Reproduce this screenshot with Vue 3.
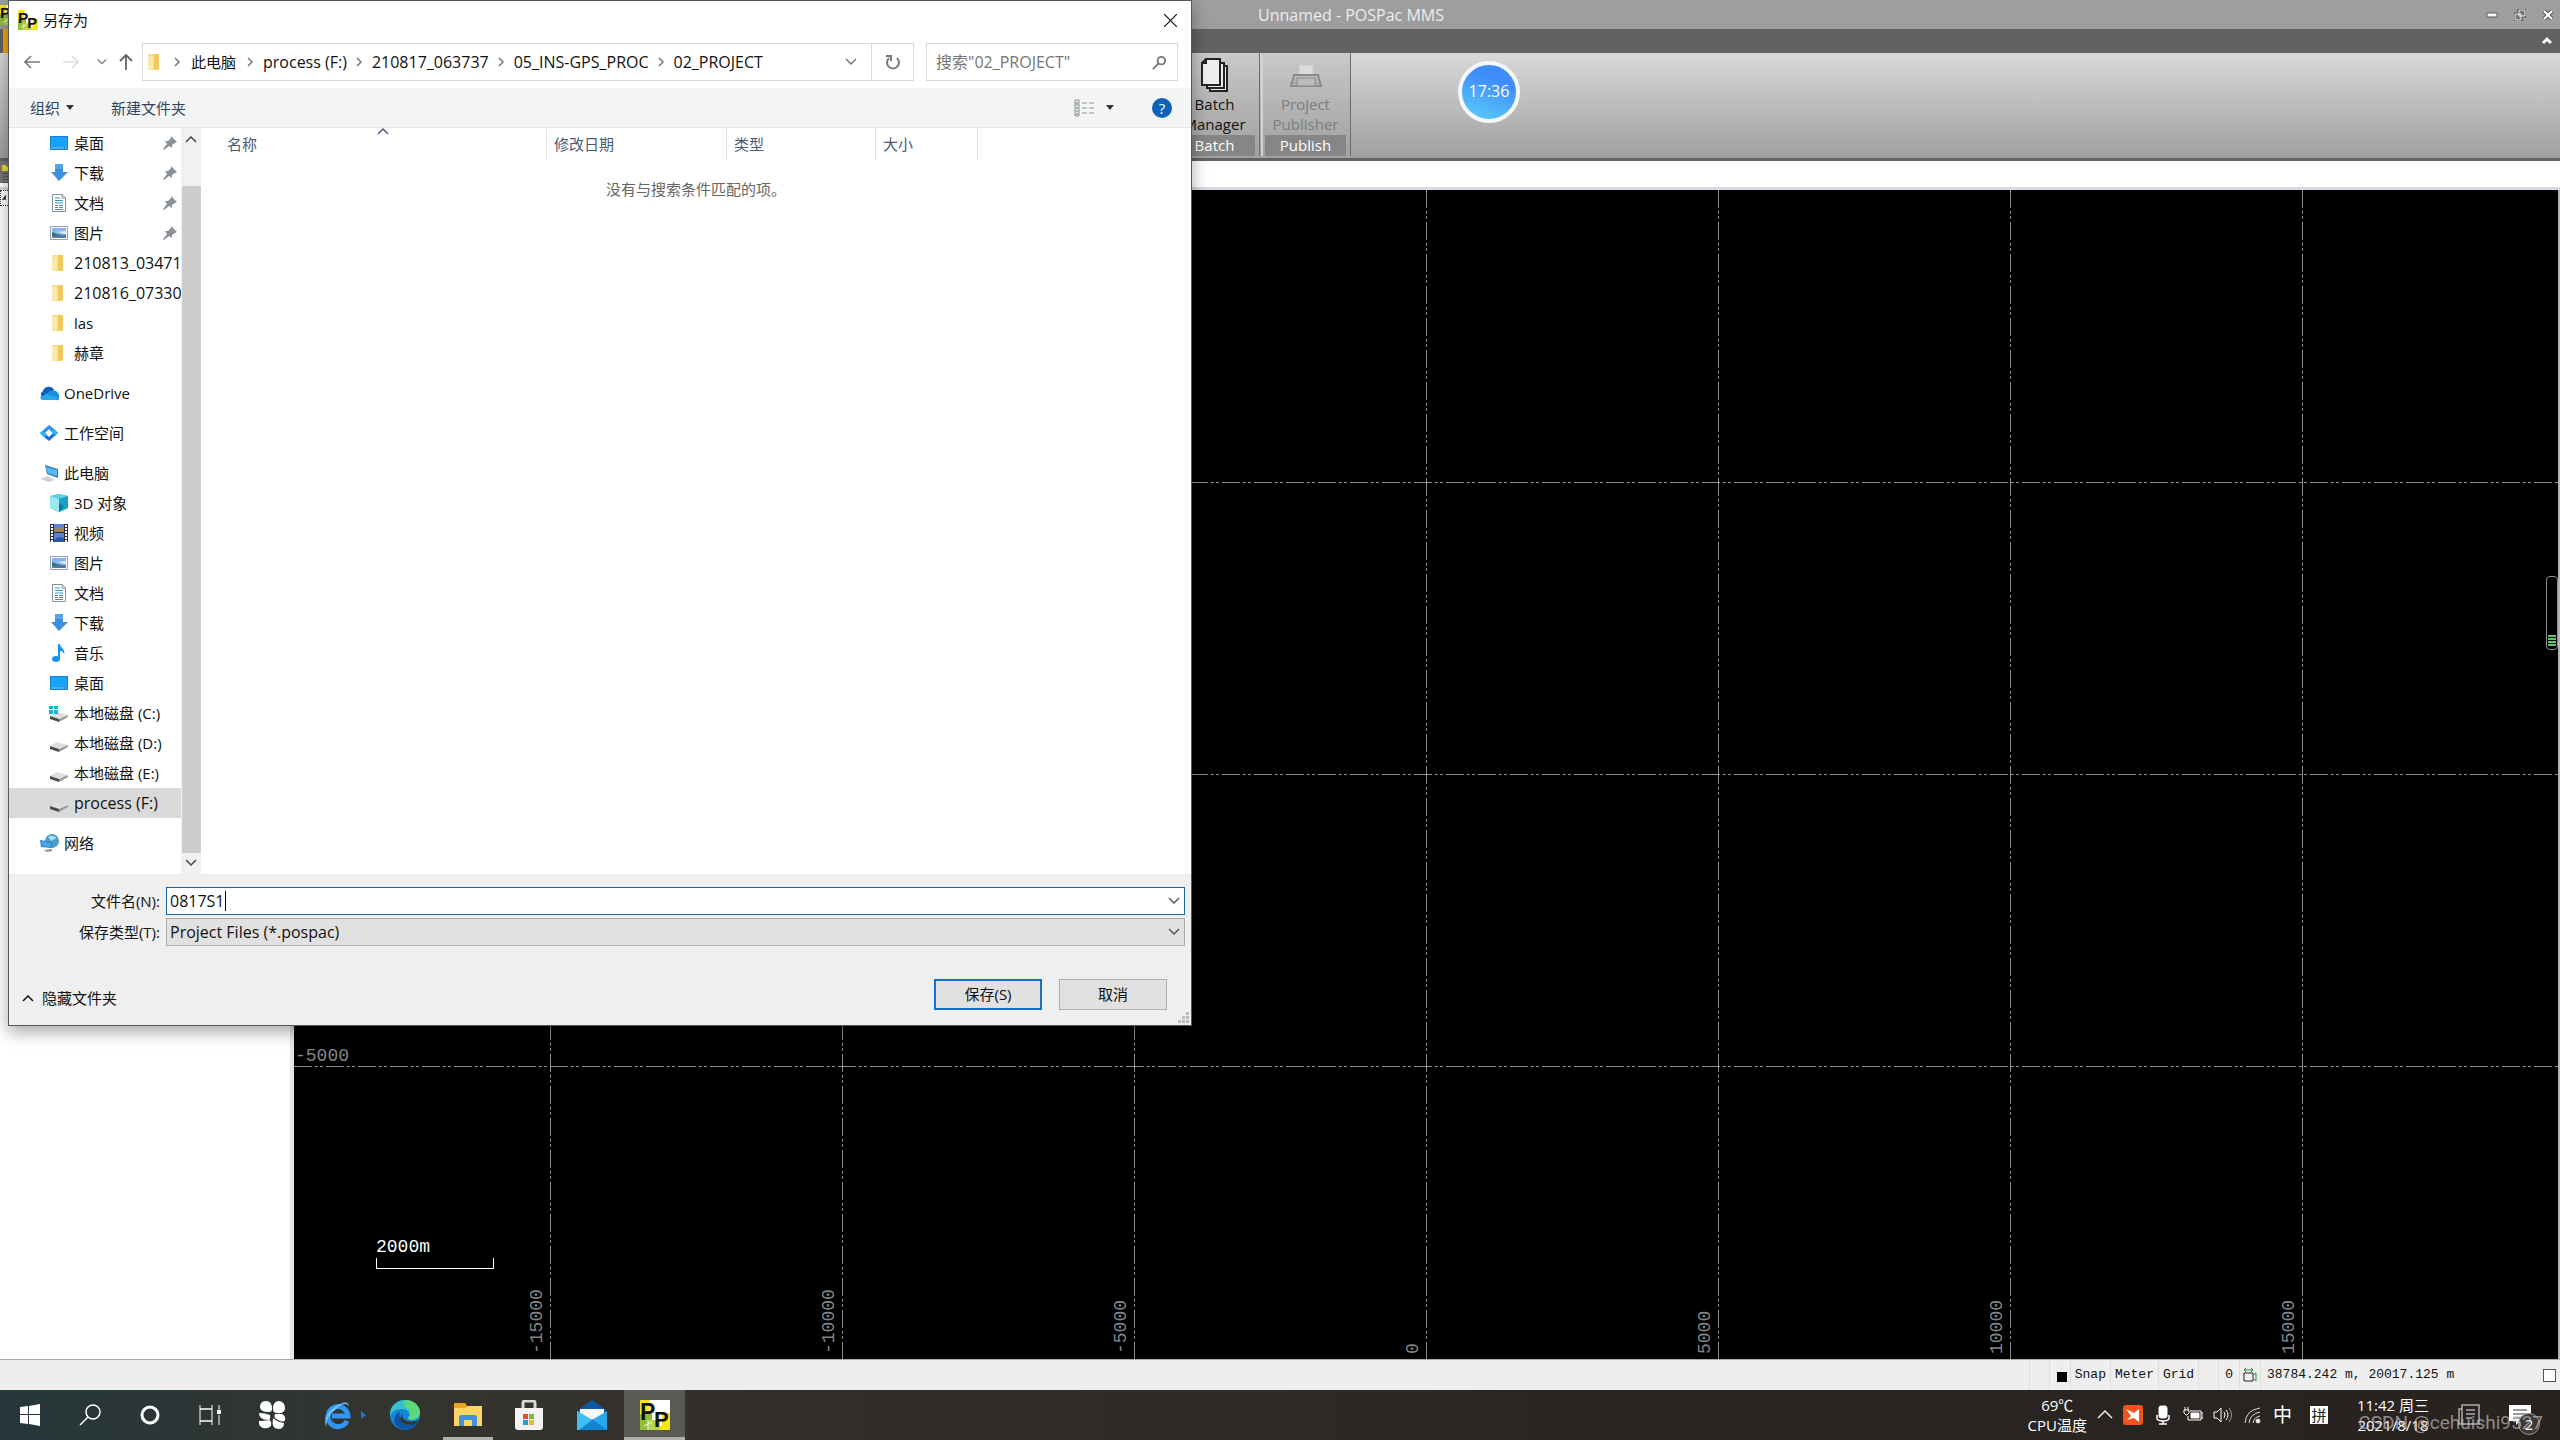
<script setup>
import { ref } from "vue";

const fileName = ref("0817S1");
const fileType = ref("pospac");
const search = ref("");
const selected = ref("process (F:)");

const crumbs = [
  { text: "此电脑", cjk: true },
  { text: "process (F:)" },
  { text: "210817_063737" },
  { text: "05_INS-GPS_PROC" },
  { text: "02_PROJECT" },
];

const groups = [
  [
    { icon: "desktop", text: "桌面", pin: true },
    { icon: "download", text: "下载", pin: true },
    { icon: "doc", text: "文档", pin: true },
    { icon: "picture", text: "图片", pin: true },
    { icon: "folder", text: "210813_034710", latin: true },
    { icon: "folder", text: "210816_073305", latin: true },
    { icon: "folder", text: "las" },
    { icon: "folder", text: "赫章" },
  ],
  [{ icon: "onedrive", text: "OneDrive", top: true }],
  [{ icon: "workspace", text: "工作空间", top: true }],
  [
    { icon: "pc", text: "此电脑", top: true },
    { icon: "cube", text: "3D 对象" },
    { icon: "video", text: "视频" },
    { icon: "picture", text: "图片" },
    { icon: "doc", text: "文档" },
    { icon: "download", text: "下载" },
    { icon: "music", text: "音乐" },
    { icon: "desktop", text: "桌面" },
    { icon: "sysdrive", text: "本地磁盘 (C:)" },
    { icon: "drive", text: "本地磁盘 (D:)" },
    { icon: "drive", text: "本地磁盘 (E:)" },
    { icon: "drive", text: "process (F:)", latin: true },
  ],
  [{ icon: "network", text: "网络", top: true }],
];

// grid lines in plot pixels
const meridians = [
  { x: 256, label: "-15000" },
  { x: 548, label: "-10000" },
  { x: 840, label: "-5000" },
  { x: 1132, label: "0" },
  { x: 1424, label: "5000" },
  { x: 1716, label: "10000" },
  { x: 2008, label: "15000" },
];
const parallels = [292, 584, 876];

const apps = [
  { icon: "start", name: "start" },
  { icon: "find", name: "search" },
  { icon: "cortana", name: "cortana" },
  { icon: "taskview", name: "task view" },
  { icon: "knot", name: "knot" },
  { icon: "ie", name: "browser", wide: true },
  { icon: "edge", name: "edge" },
  { icon: "explorer", name: "explorer", running: true },
  { icon: "store", name: "store" },
  { icon: "mail", name: "mail" },
  { icon: "pp", name: "POSPac", active: true },
];
</script>

<template>
  <div class="screen">
    <!-- shared icons -->
    <svg class="defs" aria-hidden="true">
      <symbol id="pp" viewBox="0 0 30 30">
        <path d="M0 0H30V30H0Z" fill="#fff" />
        <path d="M0 0H10L8 16H0ZM22 13H30V30H16L22 25Z" fill="#f5e614" />
        <path d="M0 14H12V30H0Z" fill="#8fbf35" />
        <path d="M9 20H20V30H9Z" fill="#b7d34a" />
        <path d="M8 20V30M4 26L12 22" stroke="#fff" fill="none" />
        <text x="0" y="20" font-size="23" font-weight="700" font-family="Liberation Sans" fill="#111">P</text>
        <text x="14" y="27" font-size="22" font-weight="700" font-family="Liberation Sans" fill="#111">P</text>
      </symbol>
      <symbol id="folder" viewBox="0 0 20 20">
        <path d="M3 2H14V18H3Z" fill="#f6dc8c" />
        <path d="M9 2H14V17L9 18Z" fill="#efc95c" />
        <path d="M3 3L8 5V19L3 17Z" fill="#fae9ae" />
      </symbol>
      <symbol id="desktop" viewBox="0 0 20 20">
        <path d="M1 3H19V17H1Z" fill="#1583d2" />
        <path d="M2 4H18V14H2Z" fill="#17a2fb" />
        <path d="M2 15H15M16 15H18" stroke="#8ed0fb" />
      </symbol>
      <symbol id="download" viewBox="0 0 20 20">
        <path d="M6 1H14V9H19L10 18L2 9H6Z" fill="#3b91dc" />
        <path d="M6 1H14V6H6Z" fill="#55a4e4" />
      </symbol>
      <symbol id="doc" viewBox="0 0 20 20">
        <path d="M3.500 1.500H13L16.500 5V18.500H3.500Z" fill="#fff" stroke="#82929c" />
        <path d="M13 1V5H17" fill="none" stroke="#82929c" />
        <path d="M6 5H11M6 7.500H14M6 10H14" stroke="#2c9bc7" />
        <path d="M6 12.500H9M6 14.500H9M10 12.500H14M6 16.500H14M10 14.500H14" stroke="#5c7f9b" />
      </symbol>
      <symbol id="picture" viewBox="0 0 20 20">
        <path d="M1.500 3.500H18.500V16.500H1.500Z" fill="#fff" stroke="#93a0b1" />
        <path d="M3 5H17V15H3Z" fill="#86b6ec" />
        <path d="M8 9L17 8V11Z" fill="#e2f1ff" />
        <path d="M3 9L8 11L17 13V15H3Z" fill="#3d6f75" />
        <path d="M3 13L17 12V15H3Z" fill="#4a7ea6" />
      </symbol>
      <symbol id="video" viewBox="0 0 20 20">
        <path d="M1 1H19V19H1Z" fill="#2b2c34" />
        <path d="M5 1H15V9H5ZM5 10H15V19H5Z" fill="#5c83d8" />
        <path d="M5 7L9 4L12 6L15 4V9H5Z" fill="#a38448" />
        <path d="M5 17L9 14L15 15V19H5Z" fill="#3157a5" />
        <path d="M3 2V19M17 2V19" stroke="#fff" stroke-width="2" stroke-dasharray="2 1" />
      </symbol>
      <symbol id="cube" viewBox="0 0 20 20">
        <path d="M10 1L19 3V15L10 19L1 15V3Z" fill="#2fc3d8" />
        <path d="M1 3L10 6V19L1 15Z" fill="#9de8ee" />
        <path d="M10 1L19 3L10 6L1 3Z" fill="#5dd3e0" />
        <path d="M10 6L19 3V15L10 19Z" fill="#17a3c6" />
        <path d="M10 10L15 13L10 19Z" fill="#0e7f9f" />
      </symbol>
      <symbol id="music" viewBox="0 0 20 20">
        <ellipse cx="7" cy="16" rx="4" ry="3" fill="#1593ef" />
        <path d="M9 1H11C11 5 17 6 15 12C15 9 13 8 11 8V16H9Z" fill="#1593ef" />
      </symbol>
      <symbol id="drive" viewBox="0 0 20 20">
        <path d="M1 13L8 9L19 12L10 16Z" fill="#dedede" />
        <path d="M1 13L10 16V19L1 16Z" fill="#4b4b4b" />
        <path d="M10 16L19 12V14L10 19Z" fill="#9b9b9b" />
      </symbol>
      <symbol id="sysdrive" viewBox="0 0 20 20">
        <use href="#drive" />
        <path d="M0 3H4V6H0ZM5 3H9V6H5ZM0 7H4V11H0ZM5 7H9V11H5Z" fill="#1fb2d6" />
      </symbol>
      <symbol id="onedrive" viewBox="0 0 20 20">
        <path d="M4 15A4 4 0 0 1 4 8A6 6 0 0 1 15 7L10 13Z" fill="#0b62bd" />
        <path d="M2 15L11 8C14 6 19 8 20 12A3 3 0 0 1 17 17H5Q2 17 2 15Z" fill="#1b8fe0" />
        <path d="M1 14L8 11L19 15Q18 17 16 17H5Q2 17 1 14Z" fill="#29a9ea" />
      </symbol>
      <symbol id="workspace" viewBox="0 0 20 20">
        <path d="M1 10L10 2L15 6L13 9L10 6L6 10L8 12L5 14Z" fill="#2d8bf5" />
        <path d="M19 10L10 18L5 14L8 12L10 14L14 10L12 8L15 6Z" fill="#1a6fe8" />
        <path d="M1 10L5 8L8 12L5 14ZM19 10L15 12L12 8L15 6Z" fill="#28b7f5" />
      </symbol>
      <symbol id="pc" viewBox="0 0 20 20">
        <path d="M6 2L19 6V15L8 11Z" fill="#2e7fbf" />
        <path d="M7 4L18 7V13L9 10Z" fill="#58b8f2" />
        <path d="M1 16L9 13L16 17L10 19Z" fill="#cfd4d8" />
      </symbol>
      <symbol id="network" viewBox="0 0 20 20">
        <circle cx="13" cy="8" r="7" fill="#4a9ec6" />
        <path d="M9 4Q13 1 18 5L12 8Z" fill="#a7dcee" />
        <path d="M1 7L13 9V15L2 14Z" fill="#2b7fc3" />
        <path d="M2 8L12 10V14L3 13Z" fill="#45a9ea" />
        <path d="M5 17L13 16V18L8 19Z" fill="#87949c" />
      </symbol>
      <symbol id="pin" viewBox="0 0 14 14">
        <path d="M8 0L14 6L12 7L9 9L9 12L6 10L1 14L0 13L4 8L2 5L5 5L8 2Z" fill="#8b9198" />
      </symbol>
      <symbol id="down" viewBox="0 0 12 12">
        <path d="M1 3L6 8L11 3" fill="none" stroke="currentColor" stroke-width="1.500" />
      </symbol>
      <symbol id="up" viewBox="0 0 12 12">
        <path d="M1 9L6 4L11 9" fill="none" stroke="currentColor" stroke-width="1.500" />
      </symbol>

      <symbol id="start" viewBox="0 0 30 30">
        <path d="M5 7L13 6V14H5ZM14 6L25 4V14H14ZM5 15H13V24L5 23ZM14 15H25V26L14 24Z" fill="#fff" />
      </symbol>
      <symbol id="find" viewBox="0 0 30 30">
        <circle cx="18" cy="12" r="7" fill="none" stroke="#fff" stroke-width="1.500" />
        <path d="M13 17L5 25" stroke="#fff" stroke-width="1.500" />
      </symbol>
      <symbol id="cortana" viewBox="0 0 30 30">
        <circle cx="15" cy="15" r="8" fill="none" stroke="#fff" stroke-width="3" />
      </symbol>
      <symbol id="taskview" viewBox="0 0 30 30">
        <path d="M5 5V9H17V5M5 25V21H17V25M5 9H17V21H5ZM24 5V10M24 15V25" fill="none" stroke="#fff" />
        <path d="M22 10H26V14H22Z" fill="#fff" />
      </symbol>
      <symbol id="knot" viewBox="0 0 30 30">
        <g fill="#fff">
          <path d="M9 1Q15 1 15 9Q15 12 12 12Q3 12 3 7Q3 1 9 1Z" />
          <path d="M22 1Q28 2 28 8Q28 14 20 13Q16 13 16 9Q16 1 22 1Z" />
          <path d="M2 13Q8 13 13 15Q14 20 11 20Q2 20 2 13Z" />
          <path d="M18 14H25Q29 16 28 20Q27 23 21 20Q16 18 18 14Z" />
          <path d="M2 21Q8 21 13 20Q15 23 14 26Q11 29 6 28Q1 26 2 21Z" />
          <path d="M16 18Q20 22 27 23Q27 29 21 29Q14 29 16 18Z" />
        </g>
      </symbol>
      <symbol id="ie" viewBox="0 0 30 30">
        <path d="M24 21A10 10 0 1 1 25 16H9" fill="none" stroke="#3096f5" stroke-width="5" />
        <path d="M3 27Q-1 15 13 6Q25 -1 26 6Q22 1 13 9Q3 17 3 27" fill="#6bc3fc" />
      </symbol>
      <symbol id="edge" viewBox="0 0 30 30">
        <circle cx="15" cy="15" r="15" fill="#1684d8" />
        <path d="M0 13C2 -4 28 -4 30 12C30 21 19 22 18 18C22 14 17 8 11 9C6 9 2 12 0 16Z" fill="#35c1d1" />
        <path d="M15 0C25 0 30 7 30 12C30 20 20 21 18 18C22 14 20 8 14 7Z" fill="#5bd87b" />
        <path d="M10 12C8 18 12 25 20 25Q24 25 28 22C24 31 10 32 5 24C3 18 6 13 10 12Z" fill="#0c55a4" />
        <path d="M13 12C10 19 17 24 29 20L28 22C22 27 12 25 10 19Z" fill="#343633" />
      </symbol>
      <symbol id="explorer" viewBox="0 0 30 30">
        <path d="M1 3H12L14 6H29V26H1Z" fill="#e8a51f" />
        <path d="M1 8H12L15 6H29V26H1Z" fill="#fbd566" />
        <path d="M6 26V18Q6 15 9 15H21Q24 15 24 18V26H19V20H11V26Z" fill="#3f91dc" />
      </symbol>
      <symbol id="store" viewBox="0 0 30 30">
        <path d="M9 9V3Q9 1 11 1H19Q21 1 21 3V9" fill="none" stroke="#d8d8d8" stroke-width="3" />
        <path d="M1 8H29V27Q29 30 26 30H4Q1 30 1 27Z" fill="#f3f3f3" />
        <path d="M9 14H14V19H9Z" fill="#e8502a" />
        <path d="M15 14H20V19H15Z" fill="#80b83d" />
        <path d="M9 20H14V25H9Z" fill="#1e9fe2" />
        <path d="M15 20H20V25H15Z" fill="#f4b71b" />
      </symbol>
      <symbol id="mail" viewBox="0 0 30 30">
        <path d="M0 11L15 0L30 11V18H0Z" fill="#0a5aa8" />
        <path d="M3 9H27V20H3Z" fill="#f5f7f9" />
        <path d="M0 11L15 20L30 11V30H0Z" fill="#2aa7ea" />
        <path d="M0 30L15 19L30 30Z" fill="#1483cf" />
        <path d="M0 11L15 20L2 30H0Z" fill="#3fbdf5" />
      </symbol>
    </svg>

    <!-- application window -->
    <header class="titlebar">
      <svg class="app-icon"><use href="#pp" /></svg>
      <span class="app-title">Unnamed - POSPac MMS</span>
      <div class="win-buttons">
        <button aria-label="minimize">
          <svg viewBox="0 0 12 12"><path d="M1 4H11V8H1Z" fill="#f4f4f4" stroke="#5c5c5c" /></svg>
        </button>
        <button aria-label="restore">
          <svg viewBox="0 0 12 12">
            <path d="M5 1H11V7H5ZM1 5H7V11H1Z" fill="#777" stroke="#4d4d4d" stroke-width="3" />
            <path d="M5 1H11V7H5ZM1 5H7V11H1Z" fill="#777" stroke="#eee" />
          </svg>
        </button>
        <button aria-label="close">
          <svg viewBox="0 0 12 12">
            <path d="M2 2L10 10M10 2L2 10" stroke="#555" stroke-width="4" />
            <path d="M2 2L10 10M10 2L2 10" stroke="#fff" stroke-width="2" />
          </svg>
        </button>
      </div>
    </header>
    <div class="tabs">
      <span class="file-tab"></span>
      <button class="collapse" aria-label="collapse ribbon">
        <svg viewBox="0 0 10 10"><path d="M1 7L5 3L9 7" fill="none" stroke="#fff" stroke-width="3" /></svg>
      </button>
    </div>
    <div class="ribbon">
      <section class="group">
        <button class="tool">
          <svg viewBox="0 0 34 34" fill="#eee" stroke="#222" stroke-width="2">
            <path d="M12 8H29V33H12Z" />
            <path d="M9 5H26V30H9Z" />
            <path d="M8 1H22V27H4V5Z" />
            <path d="M4 5H8V1" fill="none" />
          </svg>
          <span>Batch<br />Manager</span>
        </button>
        <h2>Batch</h2>
      </section>
      <section class="group">
        <button class="tool" disabled>
          <svg viewBox="0 0 34 34" fill="#bcbcbc" stroke="#8b8b8b">
            <path d="M10 7H24V17H10Z" fill="#dcdcdc" stroke="#c8c8c8" />
            <path d="M5 17H29L32 28H2Z" stroke-width="2" />
            <path d="M6 22H28M4 25H30" />
            <path d="M8 20H26V28H8Z" />
          </svg>
          <span>Project<br />Publisher</span>
        </button>
        <h2>Publish</h2>
      </section>
      <div class="bubble">17:36</div>
    </div>
    <div class="strip">
      <span class="strip-left">
        <svg viewBox="0 0 12 22">
          <path d="M2 4H6L7 6H12V10H2Z" fill="#e6dc3c" />
          <path d="M4 12V22M7 12V22" stroke="#222" stroke-dasharray="1 2" />
        </svg>
      </span>
    </div>

    <main class="work">
      <aside class="tree">
        <svg viewBox="0 0 12 16"><path d="M1 10L6 4V10Z" fill="#333" /></svg>
      </aside>
      <div class="plot">
        <svg class="canvas">
          <g class="grid-lines" shape-rendering="crispEdges">
            <line v-for="m in meridians" :key="m.x" :x1="m.x" :x2="m.x" y1="0" y2="100%" />
            <line v-for="y in parallels" :key="y" x1="0" x2="100%" :y1="y" :y2="y" />
          </g>
          <text class="axis" x="1" y="871">-5000</text>
          <svg v-for="m in meridians" :key="m.label" :x="m.x" y="100%" overflow="visible">
            <text class="axis" transform="rotate(-90)" x="5" y="-8">{{ m.label }}</text>
          </svg>
          <svg x="81" y="100%" overflow="visible">
            <text class="scale" x="1" y="-107">2000m</text>
            <path d="M1 -101V-91H118V-101" fill="none" stroke="#fff" shape-rendering="crispEdges" />
          </svg>
        </svg>
        <div class="gauge"><i></i><i></i><i></i><i></i></div>
      </div>
    </main>

    <footer class="status">
      <span class="cell"></span>
      <span class="cell icon-cell"><i class="black-box"></i></span>
      <span class="cell">Snap</span>
      <span class="cell">Meter</span>
      <span class="cell">Grid</span>
      <span class="cell"></span>
      <span class="cell zero">0</span>
      <span class="cell icon-cell">
        <svg viewBox="0 0 14 14" fill="none">
          <path d="M1 5H10V13H1Z" stroke="#222" />
          <path d="M1 2H10M3 0L1 2L3 4M8 0L10 2L8 4M13 5V13M11 7L13 5M11 11L13 13" stroke="#2d8a4a" />
        </svg>
      </span>
      <span class="coords">38784.242 m, 20017.125 m</span>
      <i class="white-box"></i>
    </footer>

    <!-- save dialog -->
    <form class="dialog" @submit.prevent>
      <div class="dlg-title">
        <svg class="dlg-icon"><use href="#pp" /></svg>
        <span>另存为</span>
        <button type="button" class="dlg-close" aria-label="关闭">
          <svg viewBox="0 0 14 14"><path d="M0 0L14 14M14 0L0 14" stroke="#111" stroke-width="1.300" /></svg>
        </button>
      </div>

      <div class="nav">
        <div class="nav-buttons">
          <button type="button" aria-label="后退">
            <svg viewBox="0 0 16 16"><path d="M16 8H1M7 2L1 8L7 14" fill="none" stroke="#777" stroke-width="1.600" /></svg>
          </button>
          <button type="button" aria-label="前进">
            <svg viewBox="0 0 16 16"><path d="M0 8H15M9 2L15 8L9 14" fill="none" stroke="#ddd" stroke-width="1.600" /></svg>
          </button>
          <button type="button" class="recent" aria-label="最近">
            <svg viewBox="0 0 12 12"><use href="#down" /></svg>
          </button>
          <button type="button" aria-label="上移">
            <svg viewBox="0 0 16 16"><path d="M8 16V1M2 7L8 1L14 7" fill="none" stroke="#666" stroke-width="1.800" /></svg>
          </button>
        </div>
        <div class="address">
          <svg class="addr-folder"><use href="#folder" /></svg>
          <span v-for="c in crumbs" :key="c.text" class="crumb" :class="{ latin: !c.cjk }">
            <svg viewBox="0 0 8 12"><path d="M2 2L6 6L2 10" fill="none" stroke="#777" stroke-width="1.500" /></svg>
            <a href="#">{{ c.text }}</a>
          </span>
          <button type="button" class="addr-down" aria-label="历史">
            <svg viewBox="0 0 12 12"><use href="#down" /></svg>
          </button>
          <button type="button" class="refresh" aria-label="刷新">
            <svg viewBox="0 0 16 16" fill="none" stroke="#777" stroke-width="2">
              <path d="M4 4A6 6 0 1 0 12 4" />
              <path d="M1 2H6V7" />
            </svg>
          </button>
        </div>
        <label class="search">
          <input v-model="search" type="text" placeholder='搜索"02_PROJECT"' aria-label="搜索" />
          <svg viewBox="0 0 16 16" fill="none" stroke="#777" stroke-width="2">
            <circle cx="10" cy="6" r="4" />
            <path d="M7 9L1 15" />
          </svg>
        </label>
      </div>

      <div class="toolbar">
        <button type="button" class="organize">组织<i class="tri"></i></button>
        <button type="button">新建文件夹</button>
        <button type="button" class="view" aria-label="视图">
          <svg viewBox="0 0 20 18" fill="none" stroke="#8a8f94">
            <path d="M1 1H5V17H1ZM1 6H5M1 12H5M8 4H13M15 4H20M8 9H13M15 9H20M8 14H13M15 14H20" />
            <path d="M3 3V5M3 8V10M3 14V16" stroke="#555" />
          </svg>
          <i class="tri"></i>
        </button>
        <button type="button" class="help" aria-label="帮助">?</button>
      </div>

      <div class="browser">
        <nav class="places">
          <ul v-for="(g, i) in groups" :key="i">
            <li v-for="item in g" :key="item.text">
              <a
                href="#"
                :class="{ top: item.top, latin: item.latin, current: item.text === selected }"
                @click.prevent="selected = item.text"
              >
                <svg class="place-icon"><use :href="'#' + item.icon" /></svg>
                <span>{{ item.text }}</span>
                <svg v-if="item.pin" class="pin"><use href="#pin" /></svg>
              </a>
            </li>
          </ul>
        </nav>
        <div class="scrollbar">
          <svg viewBox="0 0 12 12"><use href="#up" /></svg>
          <div class="thumb"></div>
          <svg viewBox="0 0 12 12"><use href="#down" /></svg>
        </div>
        <div class="files">
          <div class="columns">
            <span class="col name">名称<svg viewBox="0 0 12 12"><use href="#up" /></svg></span>
            <span class="col date">修改日期</span>
            <span class="col type">类型</span>
            <span class="col size">大小</span>
          </div>
          <p class="empty">没有与搜索条件匹配的项。</p>
        </div>
      </div>

      <div class="fields">
        <label for="fname">文件名(N):</label>
        <div class="box focus">
          <input id="fname" v-model="fileName" type="text" />
          <span class="caret"></span>
          <svg viewBox="0 0 12 12"><use href="#down" /></svg>
        </div>
        <label for="ftype">保存类型(T):</label>
        <div class="box">
          <select id="ftype" v-model="fileType">
            <option value="pospac">Project Files (*.pospac)</option>
          </select>
          <svg viewBox="0 0 12 12"><use href="#down" /></svg>
        </div>
      </div>
      <div class="actions">
        <button type="button" class="hide">
          <svg viewBox="0 0 12 12"><use href="#up" /></svg>隐藏文件夹
        </button>
        <button type="submit" class="push primary">保存(S)</button>
        <button type="button" class="push">取消</button>
      </div>
      <svg class="grip" viewBox="0 0 12 12">
        <path d="M9 0H12V3H9ZM5 4H8V7H5ZM9 4H12V7H9ZM1 8H4V11H1ZM5 8H8V11H5ZM9 8H12V11H9Z" fill="#bbb" />
      </svg>
    </form>

    <!-- taskbar -->
    <div class="taskbar">
      <div class="apps">
        <button
          v-for="a in apps"
          :key="a.name"
          :aria-label="a.name"
          :class="{ running: a.running, active: a.active }"
        >
          <svg class="app"><use :href="'#' + a.icon" /></svg>
          <i v-if="a.wide" class="more"></i>
        </button>
      </div>
      <div class="tray">
        <div class="two-line"><span>69℃</span><span>CPU温度</span></div>
        <svg class="t-chevron" viewBox="0 0 16 16"><path d="M1 11L8 4L15 11" fill="none" stroke="#eee" stroke-width="1.500" /></svg>
        <svg class="t-icon" viewBox="0 0 20 20">
          <rect width="20" height="20" rx="3" fill="#f2521b" />
          <path d="M3 4L11 8L16 4V17L11 13L4 15L8 11Z" fill="#fff" />
        </svg>
        <svg class="t-icon" viewBox="0 0 20 20" fill="none" stroke="#fff">
          <rect x="6" y="1" width="8" height="12" rx="2" fill="#fff" />
          <path d="M4 10V13Q4 16 10 16Q16 16 16 13V10M10 16V19M6 19H14" stroke-width="1.500" />
        </svg>
        <svg class="t-icon" viewBox="0 0 20 20" fill="none" stroke="#fff">
          <path d="M7 6H18V15H5V11M18 8H20V13H18M1 5H6V8L4 10H3L1 8ZM2 2V5M5 2V5" />
          <path d="M8 8H16V13H8Z" fill="#fff" />
        </svg>
        <svg class="t-icon" viewBox="0 0 20 20" fill="none" stroke="#fff">
          <path d="M1 7H4L8 3V17L4 13H1Z" />
          <path d="M11 7Q13 10 11 13M13 5Q17 10 13 15" />
          <path d="M16 3Q21 10 16 17" stroke="#999" />
        </svg>
        <svg class="t-icon" viewBox="0 0 20 20" fill="none" stroke="#ddd">
          <path d="M2 18Q3 5 17 3M6 18Q7 9 17 7M10 18Q11 12 17 11" />
          <circle cx="15" cy="16" r="2" fill="#fff" />
        </svg>
        <span class="ime">中</span>
        <span class="pinyin">拼</span>
        <div class="two-line clock"><span>11:42 周三</span><span>2021/8/18</span></div>
        <svg class="t-news" viewBox="0 0 22 22" fill="none" stroke="#aaa" stroke-width="1.500">
          <path d="M4 1H21V20H4ZM4 5H1V20H5M8 6H17M8 10H17M8 14H14" />
        </svg>
        <div class="notify">
          <svg viewBox="0 0 22 22">
            <path d="M0 1H22V17H11L7 21V17H0Z" fill="#fff" />
            <path d="M4 6H18M4 10H18M4 14H14" stroke="#333" />
          </svg>
          <span class="badge">2</span>
        </div>
      </div>
      <div class="watermark">CSDN @cehuishi9527</div>
    </div>
  </div>
</template>

<style>
body {
  background: #fff;
}
</style>

<style scoped>
.screen {
  position: relative;
  min-height: 100vh;
  display: flex;
  flex-direction: column;
  overflow: hidden;
  font: 15px/20px "Open Sans", "Noto Sans CJK SC", sans-serif;
  color: #111;
}

.screen *,
.screen {
  box-sizing: border-box;
}

.defs {
  position: absolute;
  width: 0;
  height: 0;
}

button,
input,
select {
  font: inherit;
  color: inherit;
  background: none;
  border: 0;
  padding: 0;
  margin: 0;
  border-radius: 0;
}

a {
  color: inherit;
  text-decoration: none;
}

svg {
  display: block;
  flex: none;
}

/* main window */
.titlebar {
  height: 29px;
  background: #9e9e9e;
  display: flex;
  align-items: center;
  padding-right: 6px;
}

.app-icon {
  width: 20px;
  height: 20px;
}

.app-title {
  flex: 1;
  text-align: center;
  color: #ededed;
  font-size: 16px;
  padding-left: 196px;
}

.win-buttons {
  display: flex;
  gap: 16px;
}

.win-buttons svg {
  width: 12px;
  height: 12px;
}

.tabs {
  height: 24px;
  background: #626262;
  display: flex;
  align-items: center;
  justify-content: space-between;
  padding: 0 8px 0 3px;
}

.file-tab {
  width: 80px;
  height: 24px;
  background: #f0a80c;
}

.collapse svg {
  width: 10px;
  height: 10px;
}

.ribbon {
  position: relative;
  height: 108px;
  padding-left: 1170px;
  display: flex;
  gap: 1px;
  background: linear-gradient(#d9d9d9, #bdbdbd 48%, #b1b1b1 70%, #9f9f9f);
  border-bottom: 3px solid #636363;
}

.group {
  width: 90px;
  height: 103px;
  display: flex;
  flex-direction: column;
  justify-content: space-between;
  padding: 5px 4px 0 2px;
  border-left: 2px solid #d2d2d2;
  border-right: 1px solid #6c6c6c;
  background: linear-gradient(#c9c9c9, #b4b4b4 50%, #a2a2a2);
}

.tool {
  display: flex;
  flex-direction: column;
  align-items: center;
}

.tool svg {
  width: 34px;
  height: 34px;
  margin-bottom: 2px;
}

.tool:disabled {
  color: #7d7d7d;
}

.group h2 {
  margin: 0;
  height: 21px;
  background: #868686;
  color: #fff;
  font: inherit;
  text-align: center;
}

.bubble {
  position: absolute;
  left: 1458px;
  top: 8px;
  width: 62px;
  height: 62px;
  border: 4px solid #f4f8fb;
  border-radius: 50%;
  background: linear-gradient(200deg, #3f8dfb 30%, #56c1fa 85%);
  color: #fff;
  font-size: 16px;
  line-height: 52px;
  text-align: center;
}

.strip {
  height: 29px;
  border-bottom: 3px solid #d8dae2;
}

.strip-left {
  display: block;
  width: 290px;
  height: 22px;
  background: #777;
}

.strip-left svg {
  width: 12px;
  height: 22px;
}

.work {
  flex: 1;
  display: flex;
  min-height: 900px;
}

.tree {
  width: 294px;
  background: #fff;
  border-right: 4px solid #e6e6e6;
}

.tree svg {
  width: 12px;
  height: 16px;
  border: 1px dotted #333;
}

.plot {
  position: relative;
  flex: 1;
  background: #000;
  border-right: 2px solid #b5b5b5;
}

.canvas {
  position: absolute;
  width: 100%;
  height: 100%;
}

.grid-lines line {
  stroke: #8c8c8c;
  stroke-dasharray: 18 3 3 2 3 3;
}

.axis {
  font: 18px "Liberation Mono", monospace;
  fill: #858585;
}

.scale {
  font: 18px "Liberation Mono", monospace;
  fill: #fff;
}

.gauge {
  position: absolute;
  right: 0;
  top: 386px;
  width: 12px;
  height: 74px;
  border: 1px solid #8d8d8d;
  border-radius: 4px;
  display: flex;
  flex-direction: column;
  justify-content: flex-end;
  gap: 1px;
  padding: 3px 1px;
}

.gauge i {
  height: 2px;
  background: #63c46f;
}

.status {
  height: 31px;
  background: #eee;
  border-top: 1px solid #aaa;
  display: flex;
  align-items: center;
  justify-content: flex-end;
  padding-right: 4px;
  font: 13px/30px "Liberation Mono", monospace;
}

.cell {
  height: 30px;
  min-width: 20px;
  padding: 0 4px;
  border-left: 1px solid #ddd;
}

.icon-cell {
  display: flex;
  align-items: center;
  padding: 0 3px;
}

.icon-cell svg {
  width: 14px;
  height: 14px;
}

.zero {
  padding: 0 6px;
}

.black-box {
  width: 10px;
  height: 10px;
  margin: 4px 0 0 4px;
  background: #000;
}

.coords {
  width: 283px;
  padding-left: 6px;
  border-left: 1px solid #ddd;
}

.white-box {
  width: 13px;
  height: 13px;
  background: #fff;
  border: 1px solid #555;
}

/* dialog */
.dialog {
  position: absolute;
  left: 8px;
  top: 0;
  width: calc(50vw - 96px);
  background: #efefef;
  border: 1px solid #555;
  box-shadow: 0 6px 16px rgba(0, 0, 0, 0.35);
}

.dlg-title {
  height: 38px;
  background: #fff;
  display: flex;
  align-items: center;
  gap: 5px;
  padding: 0 14px 0 9px;
}

.dlg-icon {
  width: 20px;
  height: 20px;
}

.dlg-close {
  margin-left: auto;
}

.dlg-close svg {
  width: 13px;
  height: 13px;
}

.nav {
  height: 49px;
  background: #fff;
  display: flex;
  align-items: flex-start;
  gap: 12px;
  padding: 4px 13px 0 15px;
}

.nav-buttons {
  width: 110px;
  height: 38px;
  display: flex;
  align-items: center;
  justify-content: space-between;
  color: #777;
}

.nav-buttons svg {
  width: 16px;
  height: 16px;
}

.nav-buttons .recent svg {
  width: 10px;
  height: 10px;
}

.nav-buttons button:nth-child(2) {
  margin-left: 12px;
}

.nav-buttons button:nth-child(3) {
  margin-left: 6px;
}

.address {
  flex: 1;
  height: 38px;
  margin-left: -4px;
  border: 1px solid #d9d9d9;
  display: flex;
  align-items: center;
  padding-left: 2px;
}

.addr-folder {
  width: 20px;
  height: 20px;
  margin-right: 8px;
}

.crumb {
  display: flex;
  align-items: center;
  gap: 10px;
  margin-right: 10px;
  white-space: nowrap;
}

.crumb svg {
  width: 8px;
  height: 12px;
}

.crumb.latin {
  gap: 9px;
  margin-right: 8px;
}

.latin {
  font-size: 16px;
}

.addr-down {
  margin-left: auto;
  padding: 0 14px;
  color: #777;
}

.addr-down svg {
  width: 12px;
  height: 12px;
}

.refresh {
  width: 42px;
  height: 36px;
  padding-left: 13px;
  border-left: 1px solid #d9d9d9;
}

.refresh svg {
  width: 16px;
  height: 16px;
}

.search {
  width: 252px;
  height: 38px;
  border: 1px solid #d9d9d9;
  display: flex;
  align-items: center;
  padding: 0 10px 0 9px;
}

.search input {
  flex: 1;
  min-width: 0;
  outline: 0;
  font-size: 16px;
}

.search input::placeholder {
  color: #757575;
}

.search svg {
  width: 15px;
  height: 15px;
}

.toolbar {
  height: 40px;
  background: #f3f5f5;
  border-bottom: 1px solid #e4e6e6;
  display: flex;
  align-items: center;
  padding: 0 19px 0 21px;
  color: #35425f;
}

.organize,
.view {
  display: flex;
  align-items: center;
  gap: 6px;
}

.organize {
  margin-right: 37px;
}

.view {
  margin-left: auto;
  gap: 12px;
}

.view svg {
  width: 20px;
  height: 18px;
}

.tri {
  border: 4px solid transparent;
  border-top: 5px solid #333;
  border-bottom: 0;
}

.help {
  width: 20px;
  height: 20px;
  margin-left: 38px;
  border-radius: 50%;
  background: #0b62b8;
  color: #fff;
}

.browser {
  display: flex;
  background: #fff;
}

.places {
  width: 172px;
  padding-bottom: 16px;
}

.places ul {
  list-style: none;
  margin: 0;
  padding: 0;
}

.places ul + ul {
  margin-top: 10px;
}

.places a {
  height: 30px;
  display: flex;
  align-items: center;
  gap: 5px;
  padding-left: 40px;
  overflow: hidden;
  white-space: nowrap;
}

.places a.top {
  padding-left: 30px;
}

.places a.current {
  background: #d9d9d9;
}

.place-icon {
  width: 20px;
  height: 20px;
}

.pin {
  width: 14px;
  height: 14px;
  margin: 0 4px 0 auto;
}

.scrollbar {
  width: 20px;
  background: #f1f1f1;
  display: flex;
  flex-direction: column;
  align-items: center;
  justify-content: space-between;
  padding: 5px 0;
  color: #444;
}

.scrollbar svg {
  width: 12px;
  height: 12px;
}

.thumb {
  flex: 1;
  width: 19px;
  margin: 41px 0 4px;
  background: #cdcdcd;
}

.files {
  flex: 1;
}

.columns {
  height: 32px;
  display: flex;
  padding-left: 18px;
  color: #4c5a78;
}

.col {
  position: relative;
  padding-left: 7px;
  line-height: 32px;
  border-right: 1px solid #e3e3e3;
}

.col svg {
  position: absolute;
  left: 158px;
  top: -3px;
  width: 12px;
  height: 12px;
}

.name {
  width: 328px;
  padding-left: 8px;
}

.date {
  width: 180px;
}

.type {
  width: 149px;
}

.size {
  width: 102px;
}

.empty {
  margin: 19px 0;
  text-align: center;
  color: #666;
}

.fields {
  display: grid;
  grid-template-columns: 151px 1fr;
  gap: 3px 6px;
  padding: 13px 6px 0 0;
}

.fields label {
  text-align: right;
  line-height: 28px;
  white-space: nowrap;
}

.box {
  position: relative;
  height: 28px;
  display: flex;
  align-items: center;
  padding-right: 4px;
  border: 1px solid #adadad;
  background: #e1e1e1;
  font-size: 16px;
}

.box.focus {
  border-color: #1a66a5;
  background: #fff;
}

.box input,
.box select {
  flex: 1;
  height: 26px;
  padding-left: 3px;
  appearance: none;
  outline: 0;
}

.box svg {
  width: 12px;
  height: 12px;
  color: #555;
}

.caret {
  position: absolute;
  left: 58px;
  top: 3px;
  width: 1px;
  height: 20px;
  background: #000;
}

.actions {
  display: flex;
  align-items: center;
  gap: 17px;
  padding: 33px 24px 15px 13px;
}

.hide {
  display: flex;
  align-items: center;
  gap: 8px;
  margin-right: auto;
  padding-top: 7px;
}

.hide svg {
  width: 12px;
  height: 12px;
}

.push {
  width: 108px;
  height: 31px;
  padding-bottom: 2px;
  background: #e1e1e1;
  border: 1px solid #adadad;
}

.primary {
  border: 2px solid #1273c4;
}

.grip {
  position: absolute;
  right: 2px;
  bottom: 1px;
  width: 12px;
  height: 12px;
}

/* taskbar */
.taskbar {
  position: relative;
  height: 50px;
  display: flex;
  justify-content: space-between;
  background: linear-gradient(90deg, #26373a, #34342f 16%, #34312c 25%, #292624 60%, #282321);
  color: #fff;
}

.apps {
  display: grid;
  grid-template-columns: repeat(4, 60px) 64px 68px 66px 60px 62px 64px 61px;
}

.apps button {
  position: relative;
  display: flex;
  align-items: center;
  justify-content: center;
}

.app {
  width: 30px;
  height: 30px;
}

.more {
  position: absolute;
  left: 57px;
  border: 4px solid transparent;
  border-left: 5px solid #1d74d8;
  border-right: 0;
}

.apps .active {
  background: #5b5956;
}

.running::after,
.active::after {
  content: "";
  position: absolute;
  left: 5px;
  right: 5px;
  bottom: 0;
  height: 3px;
  background: #b0b0ae;
}

.active::after {
  left: 0;
  right: 0;
}

.tray {
  display: flex;
  align-items: center;
  gap: 10px;
  padding-right: 29px;
}

.two-line {
  display: flex;
  flex-direction: column;
  text-align: center;
  white-space: nowrap;
}

.t-chevron {
  width: 16px;
  height: 16px;
}

.t-icon {
  width: 20px;
  height: 20px;
}

.ime {
  font-size: 19px;
}

.pinyin {
  width: 18px;
  height: 18px;
  margin: 0 18px 0 8px;
  background: #fff;
  color: #222;
  line-height: 18px;
  text-align: center;
}

.clock {
  width: 74px;
}

.t-news {
  width: 22px;
  height: 22px;
  margin: 0 19px 0 18px;
}

.notify {
  position: relative;
}

.notify svg {
  width: 22px;
  height: 22px;
}

.badge {
  position: absolute;
  left: 9px;
  top: 9px;
  width: 22px;
  height: 22px;
  border: 1px solid #999;
  border-radius: 50%;
  background: #3c3937;
  line-height: 20px;
  text-align: center;
}

.watermark {
  position: absolute;
  right: 17px;
  bottom: 7px;
  font: 19px/20px Roboto, sans-serif;
  color: rgba(200, 200, 200, 0.65);
}
</style>
